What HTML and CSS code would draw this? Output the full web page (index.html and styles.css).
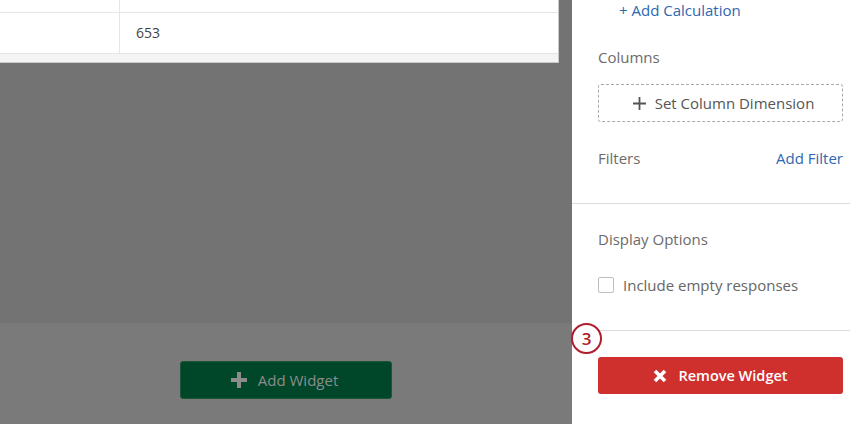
FILE: index.html
```html
<!DOCTYPE html>
<html lang="en">
<head>
    <meta charset="UTF-8">
    <title>Widget Editor</title>
    <link rel="stylesheet" href="styles.css">
</head>
<body>
    <div class="page">
        <!-- Dimmed report area -->
        <div class="report">
            <div class="report-top">
                <div class="table-card">
                    <div class="table-row row-cut">
                        <div class="cell cell-name"></div>
                        <div class="cell cell-value"></div>
                    </div>
                    <div class="table-row">
                        <div class="cell cell-name"></div>
                        <div class="cell cell-value">653</div>
                    </div>
                    <div class="table-foot"></div>
                </div>
            </div>
            <div class="report-footer">
                <button class="add-widget">
                    <svg width="16" height="16" viewBox="0 0 16 16"><path d="M8 0v16M0 8h16" stroke="currentColor" stroke-width="4"/></svg>
                    Add Widget
                </button>
            </div>
        </div>

        <!-- Widget settings sidebar -->
        <div class="sidebar">
            <div class="section">
                <a class="link add-calc">+ Add Calculation</a>
                <div class="label label-columns">Columns</div>
                <div class="dimension-box">
                    <svg width="13" height="13" viewBox="0 0 13 13"><path d="M6.5 0v13M0 6.5h13" stroke="currentColor" stroke-width="1.8"/></svg>
                    Set Column Dimension
                </div>
                <div class="filters-row">
                    <span class="label">Filters</span>
                    <a class="link">Add Filter</a>
                </div>
            </div>
            <div class="section section-display">
                <div class="label">Display Options</div>
                <label class="check-row">
                    <span class="checkbox"></span>
                    Include empty responses
                </label>
            </div>
            <div class="section section-remove">
                <button class="remove-widget">
                    <svg width="14" height="14" viewBox="0 0 14 14"><path d="M2 2l10 10M12 2L2 12" stroke="currentColor" stroke-width="3.6"/></svg>
                    Remove Widget
                </button>
            </div>
            <div class="step-badge">3</div>
        </div>
    </div>
</body>
</html>
```

FILE: styles.css
```css
body {
    margin: 0;
    font-family: "Open Sans", Arial, sans-serif;
    background-color: #ffffff;
}
.page {
    display: flex;
    width: 850px;
    height: 424px;
    overflow: hidden;
}
/* Report area behind the overlay */
.report {
    width: 572px;
    display: flex;
    flex-direction: column;
    background-color: #737373;
}
.report-top {
    height: 323px;
}
.table-card {
    width: 558px;
    background-color: #ffffff;
    border-right: 1px solid #c9c9c9;
    border-bottom: 1px solid #c9c9c9;
}
.table-row {
    display: flex;
    height: 40px;
    border-bottom: 1px solid #e6e6e6;
}
.table-row.row-cut {
    height: 12px;
}
.cell {
    font-size: 14px;
    color: #444;
    line-height: 40px;
}
.cell-name {
    width: 119px;
    border-right: 1px solid #e6e6e6;
}
.cell-value {
    padding-left: 16px;
}
.table-foot {
    height: 8px;
    background-color: #f4f4f4;
}
.report-footer {
    flex: 1;
    background-color: #7a7a7a;
    display: flex;
    justify-content: center;
    padding-top: 38px;
    box-sizing: border-box;
}
.add-widget {
    width: 212px;
    height: 38px;
    display: flex;
    align-items: center;
    justify-content: center;
    gap: 11px;
    background-color: #00472a;
    border: 1px solid #1b5536;
    border-radius: 3px;
    color: #8c8c8c;
    font-family: "Open Sans", Arial, sans-serif;
    font-size: 15px;
    padding: 0 3px 0 0;
}
/* Sidebar */
.sidebar {
    position: relative;
    flex: 1;
    background-color: #ffffff;
}
.section {
    padding: 0 7px 35px 26px;
    border-bottom: 1px solid #dcdcdc;
}
.link {
    color: #2f67b1;
    font-size: 15px;
    line-height: 20px;
}
.add-calc {
    display: block;
    padding-left: 21px;
}
.label {
    color: #6b6b6b;
    font-size: 15px;
    line-height: 20px;
}
.label-columns {
    margin-top: 27px;
}
.dimension-box {
    margin-top: 17px;
    height: 38px;
    box-sizing: border-box;
    border: 1px dashed #a9a9a9;
    border-radius: 3px;
    display: flex;
    align-items: center;
    justify-content: center;
    gap: 9px;
    color: #555;
    font-size: 15px;
    padding-left: 6px;
}
.filters-row {
    margin-top: 26px;
    display: flex;
    justify-content: space-between;
}
.section-display {
    padding-top: 25px;
}
.check-row {
    margin-top: 26px;
    display: flex;
    align-items: center;
    gap: 9px;
    color: #666;
    font-size: 15px;
    line-height: 20px;
}
.checkbox {
    width: 14px;
    height: 14px;
    border: 1px solid #bdbdbd;
    border-radius: 2px;
}
.section-remove {
    padding-top: 26px;
    border-bottom: none;
}
.remove-widget {
    width: 100%;
    height: 37px;
    display: flex;
    align-items: center;
    justify-content: center;
    gap: 11px;
    background-color: #cf2f2d;
    border: none;
    border-radius: 3px;
    color: #ffffff;
    font-family: "Open Sans", Arial, sans-serif;
    font-size: 14.5px;
    font-weight: 600;
    padding-left: 6px;
}
/* Tutorial step marker */
.step-badge {
    position: absolute;
    left: -1px;
    top: 323px;
    width: 27px;
    height: 27px;
    border: 2px solid #b01c2e;
    border-radius: 50%;
    background-color: #ffffff;
    color: #b01c2e;
    font-size: 17px;
    font-weight: 600;
    line-height: 27px;
    text-align: center;
}
```
